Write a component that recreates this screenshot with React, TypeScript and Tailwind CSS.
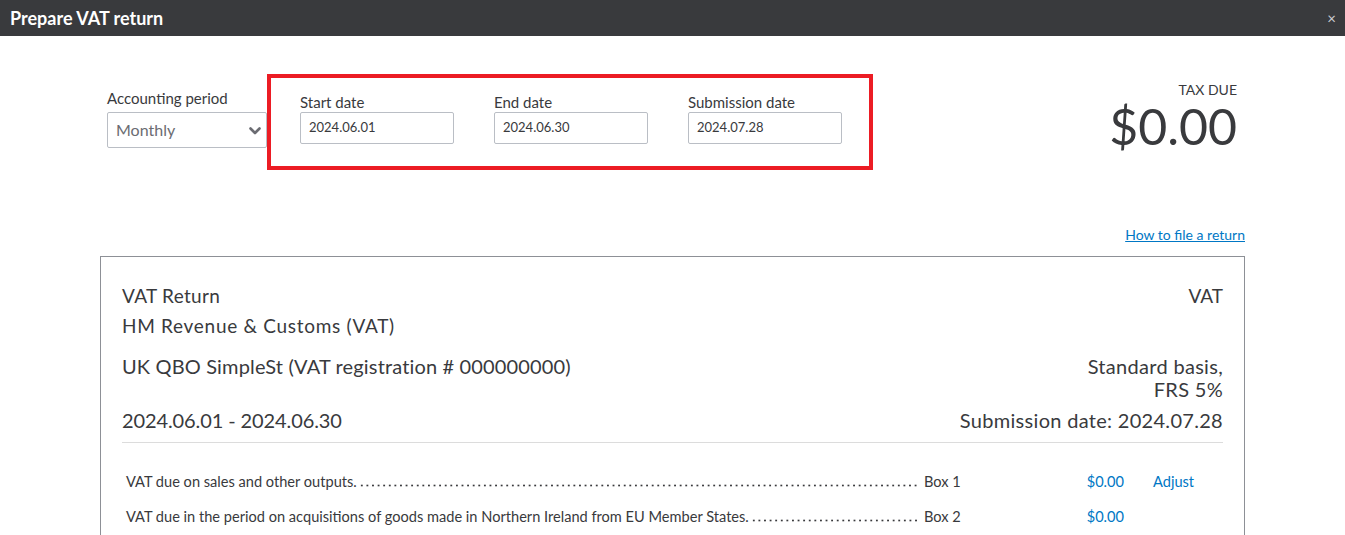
import React from "react";

function DateField({ label, value }: { label: string; value: string }) {
  return (
    <div className="flex flex-col">
      <label className="text-[15px] leading-[18px] text-[#393a3d]">{label}</label>
      <div className="mt-[1px] flex h-[32px] w-[154px] items-center rounded-[2px] border border-[#babec5] px-[8px] text-[13px] text-[#393a3d]">
        {value}
      </div>
    </div>
  );
}

function BoxRow({ label, box, amount, adjust }: { label: string; box: string; amount: string; adjust?: boolean }) {
  return (
    <div className="flex h-[35px] items-center text-[14.6px] text-[#393a3d]">
      <div className="flex w-[793px] min-w-0 items-end">
        <span className="whitespace-nowrap">{label}</span>
        <span className="mb-[5px] ml-[2px] h-[3px] min-w-0 flex-1 bg-[radial-gradient(circle,#393a3d_0.9px,transparent_1.2px)] bg-[length:5.6px_3px] bg-repeat-x" />
      </div>
      <span className="ml-[5px] w-[60px] whitespace-nowrap">{box}</span>
      <span className="w-[140px] text-right text-[#0077c5]">{amount}</span>
      <span className="ml-[29px] text-[#0077c5]">{adjust ? "Adjust" : ""}</span>
    </div>
  );
}

export default function App() {
  return (
    <div className="min-h-[535px] bg-white font-['Lato','Open_Sans',sans-serif] text-[#393a3d]">
      <header className="flex h-[36px] items-center justify-between bg-[#393a3d] pl-[10px] pr-[9px]">
        <h1 className="text-[18px] font-bold text-white">Prepare VAT return</h1>
        <span className="text-[15px] leading-none text-[#c9ccd1]">×</span>
      </header>

      <main className="mx-auto w-[1145px]">
        <section className="mt-[38px] flex items-start">
          <div className="ml-[7px] mt-[15px] flex w-[160px] flex-col">
            <label className="text-[15px] leading-[18px]">Accounting period</label>
            <div className="mt-[5px] flex h-[36px] items-center justify-between rounded-[2px] border border-[#babec5] pl-[8px] pr-[4px] text-[16px] text-[#6b6c72]">
              <span>Monthly</span>
              <svg width="14" height="14" viewBox="0 0 14 14" className="mt-[1px]">
                <path d="M2.5 4.5 L7 9 L11.5 4.5" fill="none" stroke="#6b6c72" strokeWidth="2.6" strokeLinecap="round" strokeLinejoin="round" />
              </svg>
            </div>
          </div>

          <div className="flex h-[96px] gap-[40px] border-[4px] border-[#ec1c24] pl-[29px] pr-[27px] pt-[15px]">
            <DateField label="Start date" value="2024.06.01" />
            <DateField label="End date" value="2024.06.30" />
            <DateField label="Submission date" value="2024.07.28" />
          </div>

          <div className="mr-[8px] ml-auto mt-[7px] flex flex-col items-end">
            <span className="text-[14px] leading-[18px]">TAX DUE</span>
            <span className="mt-[2px] text-[50px] leading-[50px] text-[#393a3d]">$0.00</span>
          </div>
        </section>

        <div className="mt-[56px] flex justify-end">
          <a href="#" className="text-[14px] leading-[18px] text-[#0077c5] underline">How to file a return</a>
        </div>

        <section className="mt-[12px] h-[300px] border border-[#8d9096] px-[21px] pt-[27px]">
          <div className="flex justify-between text-[19px] leading-[24px]">
            <span className="tracking-[0.3px]">VAT Return</span>
            <span>VAT</span>
          </div>
          <div className="mt-[6px] text-[19px] leading-[24px] tracking-[0.7px]">HM Revenue &amp; Customs (VAT)</div>
          <div className="mt-[17px] flex items-start justify-between text-[20px] leading-[23px]">
            <span className="tracking-[0.15px]">UK QBO SimpleSt (VAT registration # 000000000)</span>
            <span className="text-right tracking-[0.3px]">
              Standard basis,
              <br />
              FRS 5%
            </span>
          </div>
          <div className="mt-[8px] flex justify-between text-[20px] leading-[23px]">
            <span className="tracking-[-0.1px]">2024.06.01 - 2024.06.30</span>
            <span className="tracking-[0.3px]">Submission date: 2024.07.28</span>
          </div>
          <div className="mt-[10px] border-t border-[#dcdcdc]" />
          <div className="mt-[21px] pl-[4px]">
            <BoxRow label="VAT due on sales and other outputs." box="Box 1" amount="$0.00" adjust />
            <BoxRow label="VAT due in the period on acquisitions of goods made in Northern Ireland from EU Member States." box="Box 2" amount="$0.00" />
          </div>
        </section>
      </main>
    </div>
  );
}
